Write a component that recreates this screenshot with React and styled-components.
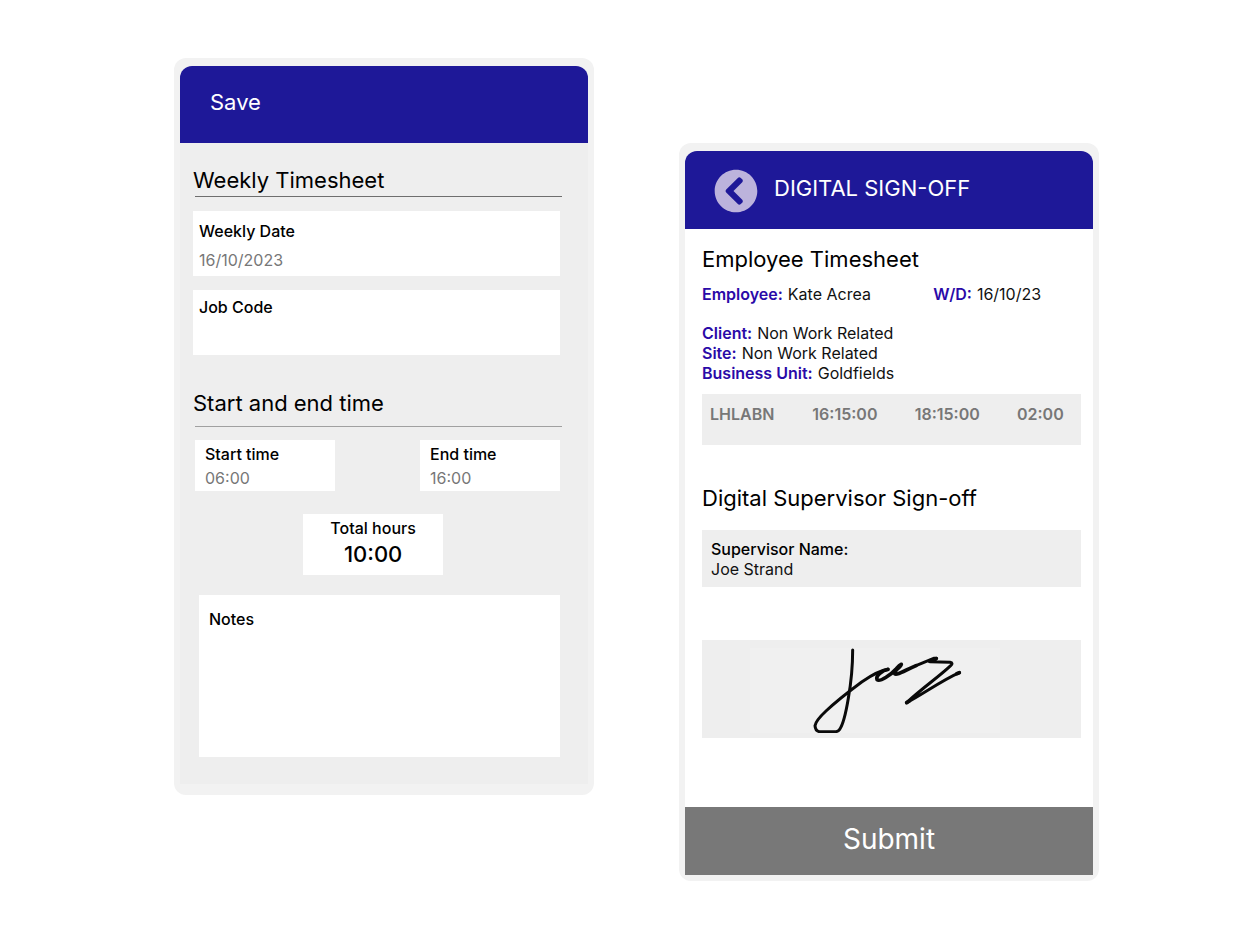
import React, { useState } from 'react';
import styled, { createGlobalStyle, css } from 'styled-components';
import { FaChevronCircleLeft } from 'react-icons/fa';

const GlobalStyle = createGlobalStyle`
  *, *::before, *::after { box-sizing: border-box; }
  body {
    margin: 0;
    background: #fff;
    color: #000;
    font-family: Inter, 'Liberation Sans', sans-serif;
    font-size: 16px;
    line-height: 20px;
  }
  button, input, textarea { font: inherit; }
`;

// --- Page and phone shells ---
const Page = styled.main`
  display: grid;
  grid-template-columns: repeat(2, minmax(0, 1fr));
  align-items: start;
  gap: 85px;
  padding: 58px 141px 50px 174px;
  @media (max-width: 1000px) {
    grid-template-columns: minmax(0, 420px);
    justify-content: center;
    padding: 32px 16px;
  }
`;

const Phone = styled.section`
  padding: 8px 6px ${({ $bottom }) => $bottom}px;
  border-radius: 12px;
  background: #f2f2f2;
  ${({ $lowered }) => $lowered && css`
    margin-top: 85px;
    @media (max-width: 1000px) { margin-top: 0; }
  `}
`;

const TopBar = styled.header`
  display: flex;
  align-items: center;
  gap: 16px;
  height: ${({ $height }) => $height}px;
  padding: 0 29px;
  border-radius: 12px 12px 0 0;
  background: #1e1898;
  color: #fff;
`;

const SaveButton = styled.button`
  border: 0;
  padding: 0 1px 5px;
  background: none;
  color: inherit;
  font-size: 22px;
  line-height: 28px;
  cursor: pointer;
`;

const BackButton = styled.button`
  display: flex;
  border: 0;
  padding: 1px 0 0;
  background: none;
  color: #bcb3dc;
  cursor: pointer;
`;

const BarTitle = styled.h1`
  margin: 0;
  padding-bottom: 4px;
  font-size: 22px;
  line-height: 28px;
  font-weight: 400;
`;

const Heading = styled.h2`
  margin: ${({ $top = 0 }) => $top}px 0 0;
  font-size: 22px;
  line-height: 28px;
  font-weight: 400;
`;

// --- Timesheet form ---
const Form = styled.form`
  padding: 23px 28px 27px 13px;
  background: #eee;
`;

const Rule = styled.hr`
  height: 1px;
  margin: ${({ $top }) => $top}px -2px ${({ $bottom }) => $bottom}px 2px;
  border: 0;
  background: ${({ $light }) => ($light ? '#a0a0a0' : '#6e6e6e')};
`;

const Field = styled.div`
  display: flex;
  flex-direction: column;
  gap: 9px;
  min-height: 65px;
  padding: ${({ $top }) => $top}px 6px 6px;
  background: #fff;
  & + & { margin-top: 14px; }
`;

const Label = styled.label`
  font-weight: 500;
`;

const Input = styled.input`
  width: 100%;
  height: 20px;
  border: 0;
  padding: 0;
  background: none;
  color: ${({ $dark }) => ($dark ? '#111' : '#777')};
  outline: none;
`;

const Times = styled.div`
  display: flex;
  justify-content: space-between;
  padding-left: 2px;
`;

const TimeField = styled.div`
  display: flex;
  flex-direction: column;
  gap: 4px;
  width: 140px;
  padding: 4px 10px 3px;
  background: #fff;
`;

const Total = styled.div`
  display: flex;
  flex-direction: column;
  align-items: center;
  gap: 2px;
  width: 140px;
  height: 61px;
  margin: 23px 0 20px 30%;
  padding-top: 4px;
  background: #fff;
`;

const TotalValue = styled.output`
  font-size: 22px;
  line-height: 28px;
  font-weight: 500;
`;

const Notes = styled.div`
  display: flex;
  flex-direction: column;
  height: 162px;
  margin-left: 6px;
  padding: 14px 10px 10px;
  background: #fff;
`;

const TextArea = styled.textarea`
  flex: 1;
  border: 0;
  padding: 0;
  resize: none;
  outline: none;
`;

// --- Sign-off screen ---
const Sheet = styled.div`
  padding: 16px 12px 69px 17px;
  background: #fff;
`;

const Details = styled.dl`
  display: grid;
  grid-template-columns: ${({ $columns }) => $columns};
  margin: ${({ $top }) => $top}px 0 0;
`;

const Detail = styled.div`
  display: flex;
  gap: 5px;
  white-space: nowrap;
  dt { color: #2a0aa8; font-weight: 600; }
  dd { margin: 0; color: #111; }
`;

const Shifts = styled.table`
  width: 100%;
  height: 51px;
  margin-top: 11px;
  border-collapse: collapse;
  table-layout: fixed;
  background: #eee;
  color: #777;
  td {
    padding: 10px 0 0 8px;
    font-weight: 600;
    vertical-align: top;
  }
`;

const Supervisor = styled.div`
  margin-top: 18px;
  padding: 9px 9px 8px;
  background: #eee;
  display: flex;
  flex-direction: column;
`;

const SignaturePad = styled.div`
  display: flex;
  justify-content: center;
  margin-top: 53px;
  padding: 8px 34px 5px 0;
  background: #eee;
`;

const Ink = styled.svg`
  display: block;
  width: 250px;
  height: 85px;
  background: #f0f0f0;
  fill: none;
  stroke: #0a0a0a;
  stroke-width: 9;
  stroke-linecap: round;
  stroke-linejoin: round;
`;

const Submit = styled.button`
  display: block;
  width: 100%;
  height: 68px;
  border: 0;
  padding: 0 0 4px;
  background: #787878;
  color: #fff;
  font-size: 28px;
  line-height: 36px;
  cursor: pointer;
`;

const shift = ['LHLABN', '16:15:00', '18:15:00', '02:00'];
const shiftWidths = ['27%', '27%', '27%', '19%'];

const jobDetails = [
  ['Client:', 'Non Work Related'],
  ['Site:', 'Non Work Related'],
  ['Business Unit:', 'Goldfields'],
];

const toMinutes = (time) => {
  const [h, m] = time.split(':').map(Number);
  return (h || 0) * 60 + (m || 0);
};

function Signature() {
  return (
    <Ink viewBox="-120 39 750 255" role="img" aria-label="Signature">
      <path d="M188 45C188 90 182 150 175 190C168 232 158 271 149 283Q145 289 138 290H88Q76 288 75 272C77 258 92 243 108 228C140 198 176 170 215 141C240 124 268 106 294 103" />
      <path strokeWidth="11" d="M294 103C278 105 256 122 261 134C270 142 302 120 319 101Q328 90 334 88C334 96 310 107 315 117C321 121 345 106 378 92" />
      <path d="M378 92L431 70H440C433 76 426 79 420 80L480 82Q491 84 482 92C445 127 398 158 350 203C395 180 454 137 508 113" />
      <path strokeWidth="11" d="M418 78L438 71M350 203L358 198M500 116L508 113" />
    </Ink>
  );
}

function TimesheetForm() {
  const [start, setStart] = useState('06:00');
  const [end, setEnd] = useState('16:00');
  const worked = Math.max(0, toMinutes(end) - toMinutes(start));
  const total = [Math.floor(worked / 60), worked % 60].map((n) => String(n).padStart(2, '0')).join(':');

  return (
    <Phone $bottom={11}>
      <TopBar $height={77}>
        <SaveButton type="submit" form="timesheet">Save</SaveButton>
      </TopBar>
      <Form id="timesheet" onSubmit={(e) => e.preventDefault()}>
        <Heading>Weekly Timesheet</Heading>
        <Rule $top={2} $bottom={14} />
        <Field $top={10}>
          <Label htmlFor="date">Weekly Date</Label>
          <Input id="date" defaultValue="16/10/2023" />
        </Field>
        <Field $top={7}>
          <Label htmlFor="job">Job Code</Label>
          <Input id="job" />
        </Field>
        <Heading $top={34}>Start and end time</Heading>
        <Rule $top={9} $bottom={13} $light />
        <Times>
          <TimeField>
            <Label htmlFor="start">Start time</Label>
            <Input id="start" value={start} onChange={(e) => setStart(e.target.value)} />
          </TimeField>
          <TimeField>
            <Label htmlFor="end">End time</Label>
            <Input id="end" value={end} onChange={(e) => setEnd(e.target.value)} />
          </TimeField>
        </Times>
        <Total>
          <Label htmlFor="total">Total hours</Label>
          <TotalValue id="total" htmlFor="start end">{total}</TotalValue>
        </Total>
        <Notes>
          <Label htmlFor="notes">Notes</Label>
          <TextArea id="notes" />
        </Notes>
      </Form>
    </Phone>
  );
}

function SignOff() {
  return (
    <Phone $bottom={6} $lowered>
      <TopBar $height={78}>
        <BackButton type="button" aria-label="Back">
          <FaChevronCircleLeft size={44} />
        </BackButton>
        <BarTitle>DIGITAL SIGN-OFF</BarTitle>
      </TopBar>
      <Sheet>
        <Heading>Employee Timesheet</Heading>
        <Details $columns="61% 39%" $top={11}>
          <Detail><dt>Employee:</dt><dd>Kate Acrea</dd></Detail>
          <Detail><dt>W/D:</dt><dd>16/10/23</dd></Detail>
        </Details>
        <Details $columns="1fr" $top={19}>
          {jobDetails.map(([name, value]) => (
            <Detail key={name}><dt>{name}</dt><dd>{value}</dd></Detail>
          ))}
        </Details>
        <Shifts>
          <colgroup>
            {shiftWidths.map((width, i) => <col key={i} style={{ width }} />)}
          </colgroup>
          <tbody>
            <tr>{shift.map((cell) => <td key={cell}>{cell}</td>)}</tr>
          </tbody>
        </Shifts>
        <Heading $top={39}>Digital Supervisor Sign-off</Heading>
        <Supervisor>
          <Label htmlFor="supervisor">Supervisor Name:</Label>
          <Input id="supervisor" defaultValue="Joe Strand" $dark />
        </Supervisor>
        <SignaturePad>
          <Signature />
        </SignaturePad>
      </Sheet>
      <Submit type="button">Submit</Submit>
    </Phone>
  );
}

export default function App() {
  return (
    <>
      <GlobalStyle />
      <Page>
        <TimesheetForm />
        <SignOff />
      </Page>
    </>
  );
}
